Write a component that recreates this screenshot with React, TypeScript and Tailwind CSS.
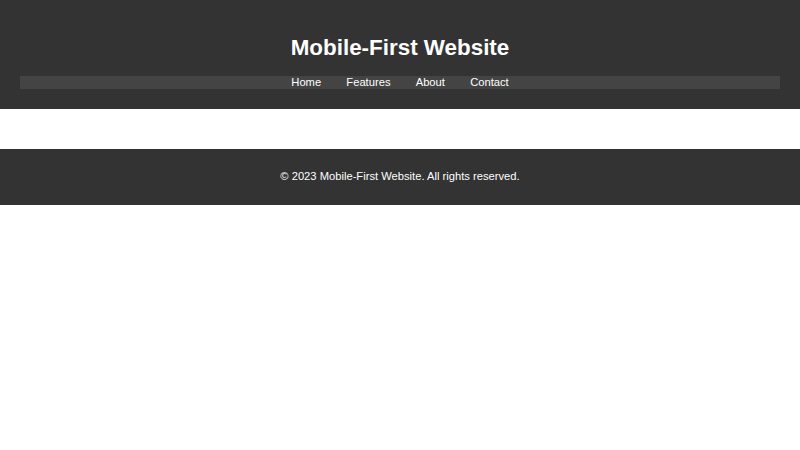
export default function App() {
  return (
    <div className="min-h-[450px] bg-white font-['Liberation_Sans',Arial,sans-serif] text-white">
      <header className="bg-[#333333] px-5 pt-[35px] pb-5 text-center">
        <h1 className="mb-[15px] text-[22.4px] font-bold leading-[25.7px]">Mobile-First Website</h1>
        <nav className="bg-[#444444]">
          <ul className="flex justify-center gap-[25.2px] text-[11.2px] leading-[13px]">
            <li><a href="#">Home</a></li>
            <li><a href="#">Features</a></li>
            <li><a href="#">About</a></li>
            <li><a href="#">Contact</a></li>
          </ul>
        </nav>
      </header>

      <main className="h-10" />

      <footer className="bg-[#333333] py-[21.5px] text-center text-[11.2px] leading-[13px]">
        <p>© 2023 Mobile-First Website. All rights reserved.</p>
      </footer>
    </div>
  )
}
